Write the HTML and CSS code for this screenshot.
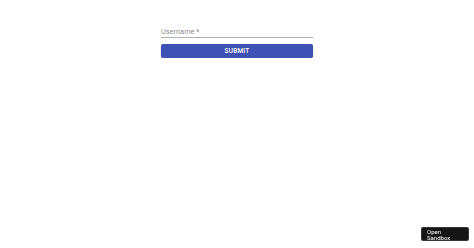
FILE: index.html
```html
<!DOCTYPE html>
<html lang="en">
<head>
<meta charset="utf-8">
<title>Form</title>
<link rel="stylesheet" href="styles.css">
</head>
<body>
<form class="form">
  <div class="field">
    <label class="field-label">Username *</label>
  </div>
  <button type="button" class="submit">SUBMIT</button>
</form>
<a class="sandbox"><span class="sandbox-label">Open Sandbox</span></a>
</body>
</html>
```
FILE: styles.css
```css
html, body {
  margin: 0;
  padding: 0;
  background: #ffffff;
  font-family: Roboto, "Liberation Sans", sans-serif;
}
.form {
  width: 152px;
  margin: 0 auto;
  padding-top: 26px;
  display: flex;
  flex-direction: column;
  gap: 6px;
}
.field {
  height: 11px;
  border-bottom: 1px solid rgba(0, 0, 0, 0.3);
  display: flex;
  align-items: center;
}
.field-label {
  font-size: 7.4px;
  line-height: 9px;
  color: rgba(0, 0, 0, 0.5);
}
.submit {
  height: 14px;
  padding: 0;
  border: none;
  border-radius: 2px;
  background: #3f51b5;
  color: #ffffff;
  font-family: Roboto, "Liberation Sans", sans-serif;
  font-size: 6.5px;
  font-weight: 500;
  letter-spacing: 0.2px;
  box-shadow: 0 1px 2px rgba(0, 0, 0, 0.25);
}
.sandbox {
  position: fixed;
  right: 5px;
  bottom: 7px;
  width: 48px;
  height: 14px;
  box-sizing: border-box;
  padding: 1px 0 0 5px;
  background: #151515;
  border: 1px solid rgba(255, 255, 255, 0.15);
  border-radius: 2px;
  color: #ffffff;
  font-size: 6px;
  line-height: 5.5px;
}
.sandbox-label {
  display: block;
  max-width: 26px;
}
```
